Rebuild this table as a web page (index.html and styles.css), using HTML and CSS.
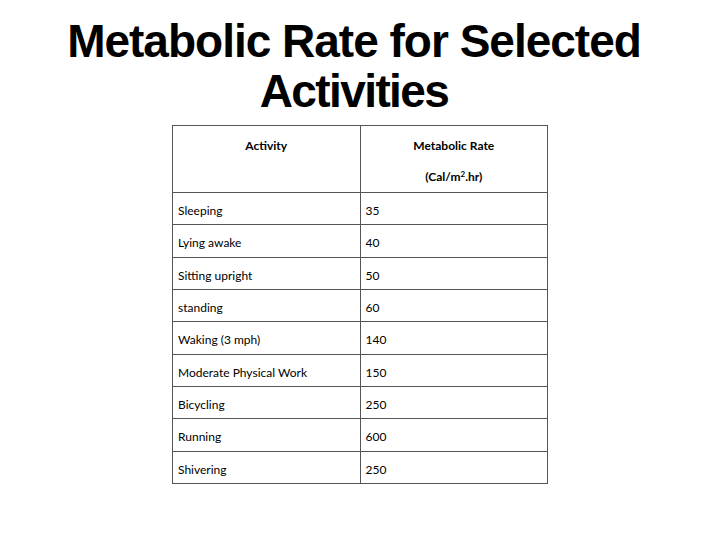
FILE: index.html
```html
<!DOCTYPE html>
<html>
<head>
<meta charset="utf-8">
<link rel="stylesheet" href="styles.css">
</head>
<body>
<h1 class="title">Metabolic Rate for Selected<br><span class="second">Activities</span></h1>
<table class="rates">
  <tr class="head">
    <td>Activity</td>
    <td>Metabolic Rate<br>(Cal/m<sup>2</sup>.hr)</td>
  </tr>
  <tr><td>Sleeping</td><td>35</td></tr>
  <tr><td>Lying awake</td><td>40</td></tr>
  <tr><td>Sitting upright</td><td>50</td></tr>
  <tr><td>standing</td><td>60</td></tr>
  <tr><td>Waking (3 mph)</td><td>140</td></tr>
  <tr><td>Moderate Physical Work</td><td>150</td></tr>
  <tr><td>Bicycling</td><td>250</td></tr>
  <tr><td>Running</td><td>600</td></tr>
  <tr><td>Shivering</td><td>250</td></tr>
</table>
</body>
</html>
```
FILE: styles.css
```css
html, body {
  margin: 0;
  padding: 0;
  background: #fff;
}
body {
  width: 720px;
  height: 540px;
  display: flex;
  flex-direction: column;
  align-items: center;
}
.title {
  margin: 16px 12px 0 0;
  font-family: "Liberation Sans", Arial, sans-serif;
  font-weight: bold;
  font-size: 46px;
  line-height: 50px;
  text-align: center;
  color: #000;
  letter-spacing: -1px;
}
.title .second {
  letter-spacing: -1.6px;
}
.rates {
  margin-top: 9px;
  border-collapse: collapse;
  width: 376px;
  font-family: Lato, "Open Sans", sans-serif;
  font-size: 12px;
  color: #000;
}
.rates td {
  border: 1.5px solid #555;
  width: 50%;
  height: 32.33px;
  box-sizing: border-box;
  padding: 8px 5px 3px 5px;
  line-height: 20px;
  vertical-align: top;
}
.rates .head td {
  height: 66px;
  padding: 4px 5px 0 5px;
  line-height: 31px;
  text-align: center;
  font-weight: bold;
}
.rates sup {
  font-size: 8px;
  line-height: 0;
  vertical-align: 4px;
}
```
